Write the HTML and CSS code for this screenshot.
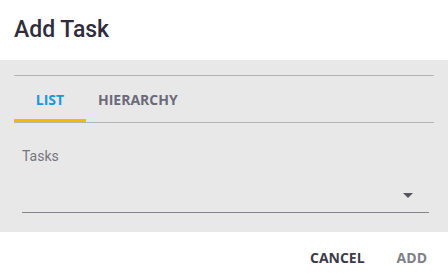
FILE: index.html
```html
<!DOCTYPE html>
<html lang="en">
<head>
    <meta charset="UTF-8">
    <title>Add Task</title>
    <link rel="stylesheet" href="styles.css">
</head>
<body>
    <div class="dialog">
        <h1 class="dialog-title">Add Task</h1>
        <div class="dialog-body">
            <div class="tabs">
                <div class="tab active">LIST</div>
                <div class="tab">HIERARCHY</div>
            </div>
            <div class="field">
                <label class="field-label">Tasks</label>
                <div class="select">
                    <span class="select-arrow"></span>
                </div>
            </div>
        </div>
        <div class="dialog-actions">
            <button class="btn btn-cancel">CANCEL</button>
            <button class="btn btn-add">ADD</button>
        </div>
    </div>
</body>
</html>
```

FILE: styles.css
```css
body {
    margin: 0;
    padding: 0;
    background: #fff;
    font-family: Roboto, "Liberation Sans", sans-serif;
}
.dialog {
    width: 448px;
    height: 278px;
    display: flex;
    flex-direction: column;
}
.dialog-title {
    margin: 0;
    height: 60px;
    box-sizing: border-box;
    padding: 14px 14px 0;
    font-size: 23px;
    font-weight: 500;
    line-height: 32px;
    color: #2f2d3b;
}
.dialog-body {
    background: #e8e8e8;
    height: 172px;
    box-sizing: border-box;
    padding: 15px 14px 0;
}
.tabs {
    display: flex;
    border-top: 1px solid #b4b4b4;
    border-bottom: 1px solid #b4b4b4;
    height: 48px;
    box-sizing: border-box;
}
.tab {
    min-width: 72px;
    box-sizing: border-box;
    padding: 3px 12px 0;
    display: flex;
    align-items: center;
    justify-content: center;
    font-family: "Open Sans", sans-serif;
    font-size: 14px;
    font-weight: 700;
    color: #6b6a78;
    border-bottom: 3px solid transparent;
}
.tab.active {
    color: #1a98d5;
    border-bottom-color: #f7b900;
}
.field {
    padding: 25px 5px 0 8px;
}
.field-label {
    display: block;
    font-size: 14px;
    color: #76757f;
    line-height: 17px;
}
.select {
    position: relative;
    height: 47px;
    border-bottom: 1px solid #85848c;
}
.select-arrow {
    position: absolute;
    right: 16px;
    top: 28px;
    width: 0;
    height: 0;
    border-left: 5px solid transparent;
    border-right: 5px solid transparent;
    border-top: 5px solid #56555e;
}
.dialog-actions {
    flex: 1;
    display: flex;
    justify-content: flex-end;
    align-items: center;
    gap: 16px;
    padding: 4px 13px 0 0;
}
.btn {
    background: none;
    border: none;
    padding: 0 8px;
    font-family: "Open Sans", sans-serif;
    font-size: 14px;
    font-weight: 700;
}
.btn-cancel {
    color: #3d3b4a;
}
.btn-add {
    color: #807f88;
}
```
